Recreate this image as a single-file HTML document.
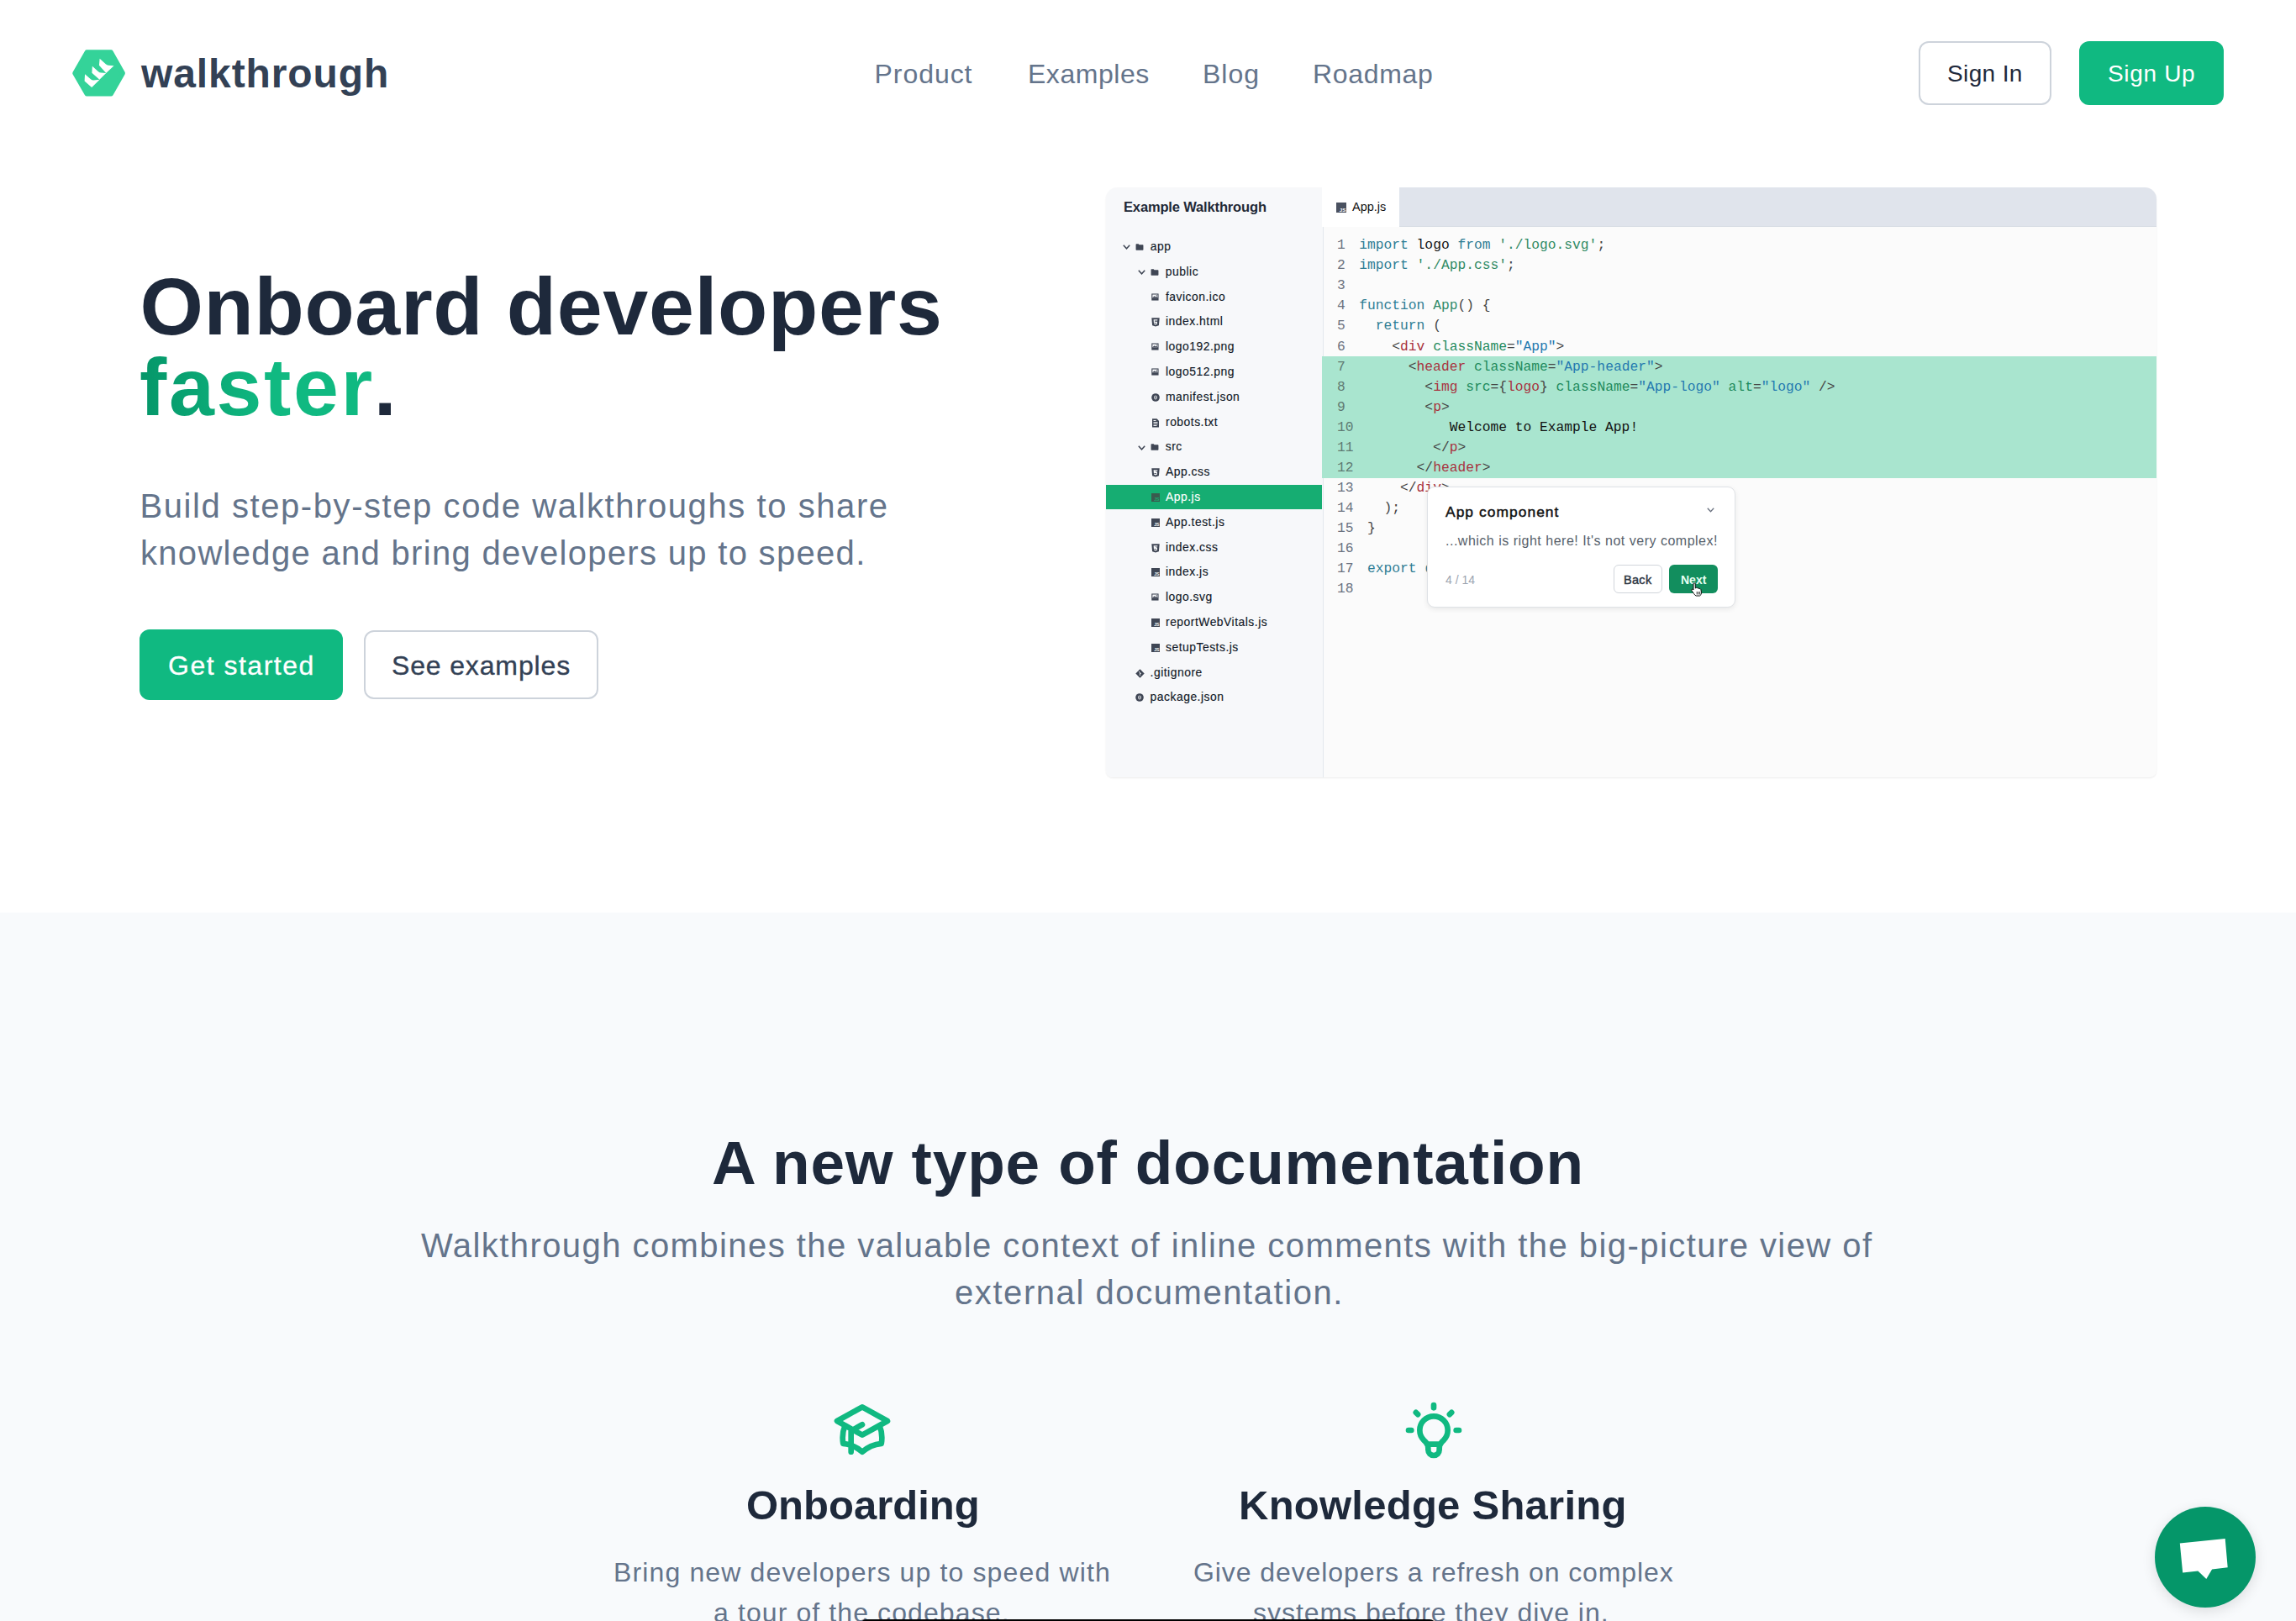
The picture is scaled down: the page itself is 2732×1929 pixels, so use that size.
<!DOCTYPE html>
<html><head><meta charset="utf-8">
<style>
html,body{margin:0;padding:0}
body{width:2732px;height:1929px;overflow:hidden;position:relative;background:#fff;font-family:"Liberation Sans",sans-serif;}
.a{position:absolute;white-space:nowrap}
.nav{font-size:32px;line-height:32px;color:#64748b}
.btn{position:absolute;box-sizing:border-box;border-radius:12px}
.tr{font-size:13.9px;line-height:13.9px;letter-spacing:0.5px;-webkit-text-stroke:0.15px currentColor}
.cl{left:1591px;font-family:"Liberation Mono",monospace;font-size:16.27px;line-height:24.07px;white-space:pre}
.num{margin-right:16.5px}
</style></head><body>

<!-- NAV -->
<svg class="a" style="left:80px;top:50px" width="80" height="75" viewBox="0 0 1729 1621">
<polygon points="195,800 505,260 1125,260 1430,800 1125,1335 505,1335" fill="#34d399" stroke="#34d399" stroke-width="120" stroke-linejoin="round"/>
<path d="M455,825 L610,960 Q640,985 680,982 L835,965 L630,1168 L445,1005 Z" fill="#fff"/>
<path d="M645,620 L800,760 Q830,788 870,790 L1000,800 L830,968 L635,795 Z" fill="#fff"/>
<path d="M835,425 L990,568 Q1020,595 1060,598 L1200,610 L1000,800 L820,600 Z" fill="#fff"/>
</svg>
<div id="logo" class="a" style="left:168px;top:64px;font-size:48px;line-height:48px;font-weight:bold;color:#334155;letter-spacing:0.9px">walkthrough</div>

<div id="n1" class="a nav" style="left:1040.5px;top:72px;letter-spacing:0.95px">Product</div>
<div id="n2" class="a nav" style="left:1223px;top:72px;letter-spacing:0.53px">Examples</div>
<div id="n3" class="a nav" style="left:1431px;top:72px;letter-spacing:1px">Blog</div>
<div id="n4" class="a nav" style="left:1562px;top:72px;letter-spacing:0.67px">Roadmap</div>

<div class="btn" style="left:2283px;top:49px;width:158px;height:76px;border:2px solid #cdd3db;background:#fff"></div>
<div id="si" class="a" style="left:2317px;top:74px;font-size:28px;line-height:28px;color:#1e293b;letter-spacing:0.37px">Sign In</div>
<div class="btn" style="left:2474px;top:49px;width:172px;height:76px;background:#10b981"></div>
<div id="su" class="a" style="left:2508px;top:74px;font-size:28px;line-height:28px;color:#fff;letter-spacing:0.67px">Sign Up</div>

<!-- HERO -->
<div id="h1" class="a" style="left:166.5px;top:316px;font-size:97px;line-height:97px;font-weight:bold;color:#1e293b;letter-spacing:0.65px">Onboard developers</div>
<div id="h2" class="a" style="left:166px;top:412px;font-size:97px;line-height:97px;font-weight:bold;color:#1e293b;letter-spacing:0.65px"><span style="letter-spacing:2.6px;background:linear-gradient(90deg,#059669,#10b981 55%);-webkit-background-clip:text;background-clip:text;color:transparent">faster</span><span style="margin-left:-1px">.</span></div>

<div id="p1" class="a" style="left:166.5px;top:582px;font-size:40px;line-height:40px;color:#64748b;letter-spacing:1.57px">Build step-by-step code walkthroughs to share</div>
<div id="p2" class="a" style="left:167px;top:638px;font-size:40px;line-height:40px;color:#64748b;letter-spacing:1.31px">knowledge and bring developers up to speed.</div>

<div class="btn" style="left:166px;top:749px;width:242px;height:84px;background:#10b981"></div>
<div id="b1" class="a" style="left:200px;top:776px;font-size:32px;line-height:32px;color:#fff;letter-spacing:1.5px;-webkit-text-stroke:0.3px #fff">Get started</div>
<div class="btn" style="left:433px;top:750px;width:279px;height:82px;border:2px solid #cdd3db;background:#fff"></div>
<div id="b2" class="a" style="left:466px;top:776px;font-size:32px;line-height:32px;color:#334155;letter-spacing:0.85px;-webkit-text-stroke:0.35px #334155">See examples</div>


<div class="a" style="left:1316px;top:223px;width:1250px;height:702px;border-radius:14px 14px 8px 8px;overflow:hidden;background:#fbfbfb;box-shadow:0 1px 2px rgba(0,0,0,0.08)">
 <div class="a" style="left:0;top:0;width:258.5px;height:702px;background:#f7f8fa;border-right:1.5px solid #e3e8ee;box-sizing:border-box"></div>
 <div class="a" style="left:257px;top:0;width:92px;height:47px;background:#fff"></div>
 <div class="a" style="left:349px;top:0;width:901px;height:47px;background:#e0e4ec;box-sizing:border-box;border-bottom:1px solid #d8dde4"></div>
 <div class="a" style="left:257px;top:201px;width:993px;height:144.5px;background:#a9e5cf"></div>
</div>
<div class="a" style="left:1337px;top:238.2px;font-size:16.5px;line-height:16.5px;font-weight:bold;color:#1f2937;letter-spacing:-0.15px">Example Walkthrough</div>
<svg class="a" style="left:1590px;top:240.5px" width="12" height="12" viewBox="0 0 12 12"><rect width="12" height="12" fill="#4a5160"/><text x="11.3" y="11.2" font-size="6.2" font-family="Liberation Sans" font-weight="bold" fill="#fff" text-anchor="end">JS</text></svg>
<div class="a" style="left:1609px;top:239.3px;font-size:14.5px;line-height:14.5px;color:#111">App.js</div>
<svg class="a" style="left:1336px;top:291.2px" width="9" height="6" viewBox="0 0 9 6"><path d="M0.8,0.8 L4.5,4.8 L8.2,0.8" fill="none" stroke="#3f4654" stroke-width="1.5"/></svg><svg class="a" style="left:1351px;top:289.9px" width="10" height="8" viewBox="0 0 11 9"><path d="M0.5,1 Q0.5,0.3 1.2,0.3 L4,0.3 L5,1.5 L9.8,1.5 Q10.5,1.5 10.5,2.2 L10.5,8 Q10.5,8.7 9.8,8.7 L1.2,8.7 Q0.5,8.7 0.5,8 Z" fill="#3f4654"/></svg><div class="a tr" style="left:1368.8px;top:286.9px;color:#111827">app</div><svg class="a" style="left:1354px;top:321.0px" width="9" height="6" viewBox="0 0 9 6"><path d="M0.8,0.8 L4.5,4.8 L8.2,0.8" fill="none" stroke="#3f4654" stroke-width="1.5"/></svg><svg class="a" style="left:1369px;top:319.7px" width="10" height="8" viewBox="0 0 11 9"><path d="M0.5,1 Q0.5,0.3 1.2,0.3 L4,0.3 L5,1.5 L9.8,1.5 Q10.5,1.5 10.5,2.2 L10.5,8 Q10.5,8.7 9.8,8.7 L1.2,8.7 Q0.5,8.7 0.5,8 Z" fill="#3f4654"/></svg><div class="a tr" style="left:1386.8px;top:316.7px;color:#111827">public</div><svg class="a" style="left:1369.5px;top:348.5px" width="9" height="9" viewBox="0 0 10 10"><rect x="0.3" y="0.5" width="9.2" height="9" fill="#3f4654"/><rect x="1.5" y="1.7" width="6.8" height="4.2" fill="#f7f8fa"/><path d="M1.5,5.9 L4,3.6 L5.5,5 L6.8,3.8 L8.3,5.9 Z" fill="#3f4654"/><circle cx="6.9" cy="2.8" r="0.7" fill="#3f4654"/></svg><div class="a tr" style="left:1387px;top:346.5px;color:#111827">favicon.ico</div><svg class="a" style="left:1369.5px;top:378.3px" width="10" height="11" viewBox="0 0 10 11"><path d="M0.3,0.3 L9.7,0.3 L8.9,9.2 L5,10.6 L1.1,9.2 Z" fill="#3f4654"/><path d="M2.6,2.2 L7.4,2.2 L7.2,3.5 L3.9,3.5 L4,4.8 L7.1,4.8 L6.8,7.8 L5,8.4 L3.2,7.8 L3.1,6.6 L4.3,6.6 L4.4,7.1 L5,7.3 L5.7,7.1 L5.8,5.9 L2.9,5.9 Z" fill="#f7f8fa"/></svg><div class="a tr" style="left:1387px;top:376.3px;color:#111827">index.html</div><svg class="a" style="left:1369.5px;top:408.1px" width="9" height="9" viewBox="0 0 10 10"><rect x="0.3" y="0.5" width="9.2" height="9" fill="#3f4654"/><rect x="1.5" y="1.7" width="6.8" height="4.2" fill="#f7f8fa"/><path d="M1.5,5.9 L4,3.6 L5.5,5 L6.8,3.8 L8.3,5.9 Z" fill="#3f4654"/><circle cx="6.9" cy="2.8" r="0.7" fill="#3f4654"/></svg><div class="a tr" style="left:1387px;top:406.1px;color:#111827">logo192.png</div><svg class="a" style="left:1369.5px;top:437.9px" width="9" height="9" viewBox="0 0 10 10"><rect x="0.3" y="0.5" width="9.2" height="9" fill="#3f4654"/><rect x="1.5" y="1.7" width="6.8" height="4.2" fill="#f7f8fa"/><path d="M1.5,5.9 L4,3.6 L5.5,5 L6.8,3.8 L8.3,5.9 Z" fill="#3f4654"/><circle cx="6.9" cy="2.8" r="0.7" fill="#3f4654"/></svg><div class="a tr" style="left:1387px;top:435.9px;color:#111827">logo512.png</div><svg class="a" style="left:1369.5px;top:467.7px" width="10" height="10" viewBox="0 0 10 10"><circle cx="5" cy="5" r="4.8" fill="#3f4654"/><path d="M4.6,2.2 Q3,3.2 3.2,5 Q3.3,7 4.8,7.8 Q3.9,5 4.6,2.2 Z M5.4,2.2 Q7,3.2 6.8,5 Q6.7,7 5.2,7.8 Q6.1,5 5.4,2.2Z" fill="#f7f8fa"/></svg><div class="a tr" style="left:1387px;top:465.7px;color:#111827">manifest.json</div><svg class="a" style="left:1369.5px;top:497.5px" width="10" height="11" viewBox="0 0 10 11"><path d="M1,0.3 L6.5,0.3 L9,2.8 L9,10.5 L1,10.5 Z" fill="#3f4654"/><rect x="2.5" y="4" width="5" height="1" fill="#f7f8fa"/><rect x="2.5" y="6" width="5" height="1" fill="#f7f8fa"/><rect x="2.5" y="8" width="4" height="1" fill="#f7f8fa"/><rect x="2.5" y="2" width="3" height="1" fill="#f7f8fa"/></svg><div class="a tr" style="left:1387px;top:495.5px;color:#111827">robots.txt</div><svg class="a" style="left:1354px;top:529.6px" width="9" height="6" viewBox="0 0 9 6"><path d="M0.8,0.8 L4.5,4.8 L8.2,0.8" fill="none" stroke="#3f4654" stroke-width="1.5"/></svg><svg class="a" style="left:1369px;top:528.3px" width="10" height="8" viewBox="0 0 11 9"><path d="M0.5,1 Q0.5,0.3 1.2,0.3 L4,0.3 L5,1.5 L9.8,1.5 Q10.5,1.5 10.5,2.2 L10.5,8 Q10.5,8.7 9.8,8.7 L1.2,8.7 Q0.5,8.7 0.5,8 Z" fill="#3f4654"/></svg><div class="a tr" style="left:1386.8px;top:525.3px;color:#111827">src</div><svg class="a" style="left:1369.5px;top:557.1px" width="10" height="11" viewBox="0 0 10 11"><path d="M0.3,0.3 L9.7,0.3 L8.9,9.2 L5,10.6 L1.1,9.2 Z" fill="#3f4654"/><path d="M2.6,2.2 L7.4,2.2 L7.2,3.5 L3.9,3.5 L7.1,4.8 L6.8,7.8 L5,8.4 L3.2,7.8 L3.1,6.6 L4.3,6.6 L4.4,7.1 L5,7.3 L5.7,7.1 L5.8,5.9 L2.9,5.9 Z" fill="#f7f8fa"/></svg><div class="a tr" style="left:1387px;top:555.1px;color:#111827">App.css</div><div class="a" style="left:1316px;top:576.8px;width:257px;height:29.6px;background:#16ad72"></div><svg class="a" style="left:1369.5px;top:586.9px" width="10" height="10" viewBox="0 0 10 10"><rect x="0" y="0" width="10" height="10" fill="#3a5a4e"/><text x="9.6" y="9.4" font-size="5.2" font-family="Liberation Sans" font-weight="bold" fill="#16ad72" text-anchor="end">JS</text></svg><div class="a tr" style="left:1387px;top:584.9px;color:#fff">App.js</div><svg class="a" style="left:1369.5px;top:616.7px" width="10" height="10" viewBox="0 0 10 10"><rect x="0" y="0" width="10" height="10" fill="#3f4654"/><text x="9.6" y="9.4" font-size="5.2" font-family="Liberation Sans" font-weight="bold" fill="#f7f8fa" text-anchor="end">JS</text></svg><div class="a tr" style="left:1387px;top:614.7px;color:#111827">App.test.js</div><svg class="a" style="left:1369.5px;top:646.5px" width="10" height="11" viewBox="0 0 10 11"><path d="M0.3,0.3 L9.7,0.3 L8.9,9.2 L5,10.6 L1.1,9.2 Z" fill="#3f4654"/><path d="M2.6,2.2 L7.4,2.2 L7.2,3.5 L3.9,3.5 L7.1,4.8 L6.8,7.8 L5,8.4 L3.2,7.8 L3.1,6.6 L4.3,6.6 L4.4,7.1 L5,7.3 L5.7,7.1 L5.8,5.9 L2.9,5.9 Z" fill="#f7f8fa"/></svg><div class="a tr" style="left:1387px;top:644.5px;color:#111827">index.css</div><svg class="a" style="left:1369.5px;top:676.3px" width="10" height="10" viewBox="0 0 10 10"><rect x="0" y="0" width="10" height="10" fill="#3f4654"/><text x="9.6" y="9.4" font-size="5.2" font-family="Liberation Sans" font-weight="bold" fill="#f7f8fa" text-anchor="end">JS</text></svg><div class="a tr" style="left:1387px;top:674.3px;color:#111827">index.js</div><svg class="a" style="left:1369.5px;top:706.1px" width="9" height="9" viewBox="0 0 10 10"><rect x="0.3" y="0.5" width="9.2" height="9" fill="#3f4654"/><rect x="1.5" y="1.7" width="6.8" height="4.2" fill="#f7f8fa"/><path d="M1.5,5.9 L4,3.6 L5.5,5 L6.8,3.8 L8.3,5.9 Z" fill="#3f4654"/><circle cx="6.9" cy="2.8" r="0.7" fill="#3f4654"/></svg><div class="a tr" style="left:1387px;top:704.1px;color:#111827">logo.svg</div><svg class="a" style="left:1369.5px;top:735.9px" width="10" height="10" viewBox="0 0 10 10"><rect x="0" y="0" width="10" height="10" fill="#3f4654"/><text x="9.6" y="9.4" font-size="5.2" font-family="Liberation Sans" font-weight="bold" fill="#f7f8fa" text-anchor="end">JS</text></svg><div class="a tr" style="left:1387px;top:733.9px;color:#111827">reportWebVitals.js</div><svg class="a" style="left:1369.5px;top:765.7px" width="10" height="10" viewBox="0 0 10 10"><rect x="0" y="0" width="10" height="10" fill="#3f4654"/><text x="9.6" y="9.4" font-size="5.2" font-family="Liberation Sans" font-weight="bold" fill="#f7f8fa" text-anchor="end">JS</text></svg><div class="a tr" style="left:1387px;top:763.7px;color:#111827">setupTests.js</div><svg class="a" style="left:1350.5px;top:795.5px" width="11" height="11" viewBox="0 0 11 11"><path d="M5.5,0.3 L10.7,5.5 L5.5,10.7 L0.3,5.5 Z" fill="#3f4654"/><path d="M4,3 L6.8,5.8 M5.4,4.4 L5.4,8" stroke="#f7f8fa" stroke-width="0.9"/></svg><div class="a tr" style="left:1368.6px;top:793.5px;color:#111827">.gitignore</div><svg class="a" style="left:1350.5px;top:825.3px" width="10" height="10" viewBox="0 0 10 10"><circle cx="5" cy="5" r="4.8" fill="#3f4654"/><path d="M4.6,2.2 Q3,3.2 3.2,5 Q3.3,7 4.8,7.8 Q3.9,5 4.6,2.2 Z M5.4,2.2 Q7,3.2 6.8,5 Q6.7,7 5.2,7.8 Q6.1,5 5.4,2.2Z" fill="#f7f8fa"/></svg><div class="a tr" style="left:1368.6px;top:823.3px;color:#111827">package.json</div>
<div class="a cl" style="top:280.20px"><span class="num" style="color:#6b7280">1</span><span style="color:#2e7d94">import</span><span style="color:#111"> logo </span><span style="color:#2e7d94">from</span><span style="color:#111"> </span><span style="color:#2f8a64">'./logo.svg'</span><span style="color:#444">;</span></div><div class="a cl" style="top:304.27px"><span class="num" style="color:#6b7280">2</span><span style="color:#2e7d94">import</span><span style="color:#111"> </span><span style="color:#2f8a64">'./App.css'</span><span style="color:#444">;</span></div><div class="a cl" style="top:328.34px"><span class="num" style="color:#6b7280">3</span></div><div class="a cl" style="top:352.41px"><span class="num" style="color:#6b7280">4</span><span style="color:#2e7d94">function</span><span style="color:#111"> </span><span style="color:#2f8a6a">App</span><span style="color:#444">() {</span></div><div class="a cl" style="top:376.48px"><span class="num" style="color:#6b7280">5</span><span style="color:#111">  </span><span style="color:#2e7d94">return</span><span style="color:#444"> (</span></div><div class="a cl" style="top:400.55px"><span class="num" style="color:#6b7280">6</span><span style="color:#444">    &lt;</span><span style="color:#a8323e">div</span><span style="color:#111"> </span><span style="color:#1e8a5c">className</span><span style="color:#444">=</span><span style="color:#2479b0">"App"</span><span style="color:#444">&gt;</span></div><div class="a cl" style="top:424.62px"><span class="num" style="color:#5f7a72">7</span><span style="color:#444">      &lt;</span><span style="color:#a8323e">header</span><span style="color:#111"> </span><span style="color:#1e8a5c">className</span><span style="color:#444">=</span><span style="color:#2479b0">"App-header"</span><span style="color:#444">&gt;</span></div><div class="a cl" style="top:448.69px"><span class="num" style="color:#5f7a72">8</span><span style="color:#444">        &lt;</span><span style="color:#a8323e">img</span><span style="color:#111"> </span><span style="color:#1e8a5c">src</span><span style="color:#444">={</span><span style="color:#a8323e">logo</span><span style="color:#444">}</span><span style="color:#111"> </span><span style="color:#1e8a5c">className</span><span style="color:#444">=</span><span style="color:#2479b0">"App-logo"</span><span style="color:#111"> </span><span style="color:#1e8a5c">alt</span><span style="color:#444">=</span><span style="color:#2479b0">"logo"</span><span style="color:#444"> /&gt;</span></div><div class="a cl" style="top:472.76px"><span class="num" style="color:#5f7a72">9</span><span style="color:#444">        &lt;</span><span style="color:#a8323e">p</span><span style="color:#444">&gt;</span></div><div class="a cl" style="top:496.83px"><span class="num" style="color:#5f7a72">10</span><span style="color:#111">          Welcome to Example App!</span></div><div class="a cl" style="top:520.90px"><span class="num" style="color:#5f7a72">11</span><span style="color:#444">        &lt;/</span><span style="color:#a8323e">p</span><span style="color:#444">&gt;</span></div><div class="a cl" style="top:544.97px"><span class="num" style="color:#5f7a72">12</span><span style="color:#444">      &lt;/</span><span style="color:#a8323e">header</span><span style="color:#444">&gt;</span></div><div class="a cl" style="top:569.04px"><span class="num" style="color:#6b7280">13</span><span style="color:#444">    &lt;/</span><span style="color:#a8323e">div</span><span style="color:#444">&gt;</span></div><div class="a cl" style="top:593.11px"><span class="num" style="color:#6b7280">14</span><span style="color:#444">  );</span></div><div class="a cl" style="top:617.18px"><span class="num" style="color:#6b7280">15</span><span style="color:#444">}</span></div><div class="a cl" style="top:641.25px"><span class="num" style="color:#6b7280">16</span></div><div class="a cl" style="top:665.32px"><span class="num" style="color:#6b7280">17</span><span style="color:#2e7d94">export</span><span style="color:#111"> </span><span style="color:#2e7d94">default</span><span style="color:#111"> App;</span></div><div class="a cl" style="top:689.39px"><span class="num" style="color:#6b7280">18</span></div>
<!-- popup -->
<div class="a" style="left:1697.5px;top:578.5px;width:367px;height:144px;box-sizing:border-box;background:#fff;border:1.5px solid #dfe2e6;border-radius:9px;box-shadow:0 2px 6px rgba(0,0,0,0.08)"></div>
<div class="a" style="left:1720px;top:601.3px;font-size:17.4px;line-height:17.4px;color:#111;letter-spacing:1.05px;-webkit-text-stroke:0.45px #111">App component</div>
<svg class="a" style="left:2031px;top:603.5px" width="9" height="6" viewBox="0 0 9 6"><path d="M0.8,0.8 L4.5,4.8 L8.2,0.8" fill="none" stroke="#6b7280" stroke-width="1.3"/></svg>
<div class="a" style="left:1720px;top:635.5px;font-size:16px;line-height:16px;color:#575f6b;letter-spacing:0.5px">...which is right here! It's not very complex!</div>
<div class="a" style="left:1720px;top:683.1px;font-size:14px;line-height:14px;color:#9ca3af">4 / 14</div>
<div class="a" style="left:1919.5px;top:672px;width:58px;height:34px;box-sizing:border-box;background:#fff;border:1.2px solid #d1d5db;border-radius:6px"></div>
<div class="a" style="left:1932px;top:682.5px;font-size:14.5px;line-height:14.5px;color:#2b3340;letter-spacing:0.3px;-webkit-text-stroke:0.4px #2b3340">Back</div>
<div class="a" style="left:1986px;top:672px;width:58px;height:34px;background:#128e5e;border-radius:6px"></div>
<div class="a" style="left:2000px;top:682.5px;font-size:14px;line-height:14px;color:#e6fff3;font-weight:bold">Next</div>
<svg class="a" style="left:2011px;top:693px" width="16" height="17" viewBox="0 0 16 17"><path d="M4,1.2 Q5.3,0.4 6.2,1.5 L6.4,7 L7.4,6.4 Q8.6,6 9.2,7 Q10.3,6.6 11,7.6 Q12.2,7.3 12.8,8.4 L13.6,12.2 Q13.6,15 11.5,16 L7.2,16 Q5.8,15.5 4.8,13.8 L1.8,9.6 Q1.3,8.6 2.2,8.2 Q3.2,7.9 4,9 L4,1.2 Z" fill="#fff" stroke="#111" stroke-width="1"/><path d="M8.2,11 L8.2,14.5 M10,11 L10,14.5 M11.7,11 L11.7,14.5" stroke="#111" stroke-width="0.8"/></svg>


<!-- SECTION 2 -->
<div class="a" style="left:0;top:1086px;width:2732px;height:843px;background:#f8fafc"></div>
<div id="s2h" class="a" style="left:847px;top:1347px;font-size:73px;line-height:73px;font-weight:bold;color:#1e293b;letter-spacing:0.84px">A new type of documentation</div>
<div id="s2p1" class="a" style="left:501px;top:1462px;font-size:40px;line-height:40px;color:#64748b;letter-spacing:1.44px">Walkthrough combines the valuable context of inline comments with the big-picture view of</div>
<div id="s2p2" class="a" style="left:1136px;top:1518px;font-size:40px;line-height:40px;color:#64748b;letter-spacing:1.57px">external documentation.</div>

<svg class="a" style="left:986px;top:1661px" width="80" height="80" viewBox="0 0 24 24" fill="none" stroke="#10b981" stroke-width="2" stroke-linecap="round" stroke-linejoin="round"><path d="M12 14l9-5-9-5-9 5 9 5zm0 0l6.16-3.422a12.083 12.083 0 01.665 6.479A11.952 11.952 0 0012 20.055a11.952 11.952 0 00-6.824-2.998 12.078 12.078 0 01.665-6.479L12 14zm-4 6v-7.5l4-2.222"/></svg>
<svg class="a" style="left:1666px;top:1662px" width="80" height="80" viewBox="0 0 24 24" fill="none" stroke="#10b981" stroke-width="2" stroke-linecap="round" stroke-linejoin="round"><path d="M9.663 17h4.673M12 3v1m6.364 1.636l-.707.707M21 12h-1M4 12H3m3.343-5.657l-.707-.707m2.828 9.9a5 5 0 117.072 0l-.548.547A3.374 3.374 0 0014 18.469V19a2 2 0 11-4 0v-.531c0-.895-.356-1.754-.988-2.386l-.548-.547z"/></svg>

<div id="f1h" class="a" style="left:888px;top:1767px;font-size:49px;line-height:49px;font-weight:bold;color:#1e293b">Onboarding</div>
<div id="f2h" class="a" style="left:1474px;top:1767px;font-size:49px;line-height:49px;font-weight:bold;color:#1e293b;letter-spacing:0.25px">Knowledge Sharing</div>
<div id="f1p1" class="a" style="left:730px;top:1855px;font-size:32px;line-height:32px;color:#64748b;letter-spacing:1.14px">Bring new developers up to speed with</div>
<div id="f1p2" class="a" style="left:849px;top:1903px;font-size:32px;line-height:32px;color:#64748b;letter-spacing:1.1px">a tour of the codebase.</div>
<div id="f2p1" class="a" style="left:1420px;top:1855px;font-size:32px;line-height:32px;color:#64748b;letter-spacing:0.91px">Give developers a refresh on complex</div>
<div id="f2p2" class="a" style="left:1491px;top:1903px;font-size:32px;line-height:32px;color:#64748b;letter-spacing:0.96px">systems before they dive in.</div>

<div class="a" style="left:1023px;top:1927px;width:686px;height:20px;background:#000;border-radius:8px"></div>

<!-- chat -->
<div class="a" style="left:2564px;top:1793px;width:120px;height:120px;border-radius:50%;background:#059669;box-shadow:0 4px 16px rgba(0,0,0,0.12)"></div>
<svg class="a" style="left:2520px;top:1760px" width="212" height="169" viewBox="0 0 212 169"><polygon points="73.8,76.6 127.7,70.9 130.7,105.3 112.1,107.4 105.3,118.9 95.4,109.5 77.2,111.4" fill="#fff"/></svg>

</body></html>
